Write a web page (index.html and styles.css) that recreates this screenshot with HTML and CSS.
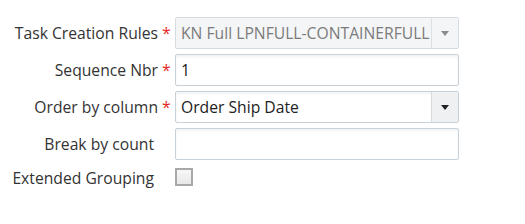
FILE: index.html
```html
<html lang="en">
<head>
    <meta charset="UTF-8">
    <title>Task Creation Rules</title>
    <link rel="stylesheet" href="styles.css">
</head>
<body>

    <div class="form">
        <label class="req">Task Creation Rules<span class="star">*</span></label>
        <div class="select disabled">
            <div class="value">KN Full LPNFULL-CONTAINERFULL</div>
            <div class="arrow"><span class="tri"></span></div>
        </div>

        <label class="req">Sequence Nbr<span class="star">*</span></label>
        <div class="input"><div class="value">1</div></div>

        <label class="req">Order by column<span class="star">*</span></label>
        <div class="select">
            <div class="value">Order Ship Date</div>
            <div class="arrow"><span class="tri"></span></div>
        </div>

        <label>Break by count</label>
        <div class="input"><div class="value"></div></div>

        <label class="check-label">Extended Grouping</label>
        <div class="check-row"><span class="checkbox"></span></div>
    </div>

</body>
</html>
```

FILE: styles.css
```css
body {
    margin: 0;
    font-family: "Open Sans", Arial, sans-serif;
    font-size: 15.7px;
    color: #333333;
    background: #ffffff;
}

.form {
    display: grid;
    grid-template-columns: 168px 284px;
    column-gap: 7px;
    row-gap: 5px;
    padding-top: 17px;
}

label {
    height: 32px;
    display: flex;
    align-items: center;
    justify-content: flex-end;
    padding-right: 14px;
    white-space: nowrap;
}

label.req {
    padding-right: 0;
}

.star {
    color: #e5261f;
    width: 6px;
    margin-left: 4px;
}

.check-label {
    height: 26px;
}

.input, .select {
    height: 32px;
    box-sizing: border-box;
    border: 1px solid #c8d0d8;
    border-radius: 2px;
    background: #ffffff;
    display: flex;
    box-shadow: inset 0 2px 3px rgba(0, 0, 0, 0.05);
}

.value {
    flex: 1;
    overflow: hidden;
    white-space: nowrap;
    padding: 0 5px;
    line-height: 30px;
    color: #222222;
}

.arrow {
    width: 26px;
    border-left: 1px solid #d6dbe0;
    background: #eef0f2;
    display: flex;
    align-items: center;
    justify-content: center;
}

.tri {
    width: 0;
    height: 0;
    border-left: 4px solid transparent;
    border-right: 4px solid transparent;
    border-top: 5px solid #222222;
}

.disabled {
    background: #f4f5f6;
    box-shadow: none;
    border-color: #d6dbe0;
}

.disabled .value {
    color: #7b7b7b;
}

.disabled .arrow {
    background: #f4f5f6;
    border-left-color: #dde1e5;
}

.disabled .tri {
    border-top-color: #8a8a8a;
}

.check-row {
    height: 26px;
    display: flex;
    align-items: flex-start;
    padding-top: 3px;
    box-sizing: border-box;
}

.checkbox {
    width: 18px;
    height: 18px;
    box-sizing: border-box;
    border: 2px solid #a8a8a8;
    background: linear-gradient(#f8f8f8, #e8e8e8);
}
```
